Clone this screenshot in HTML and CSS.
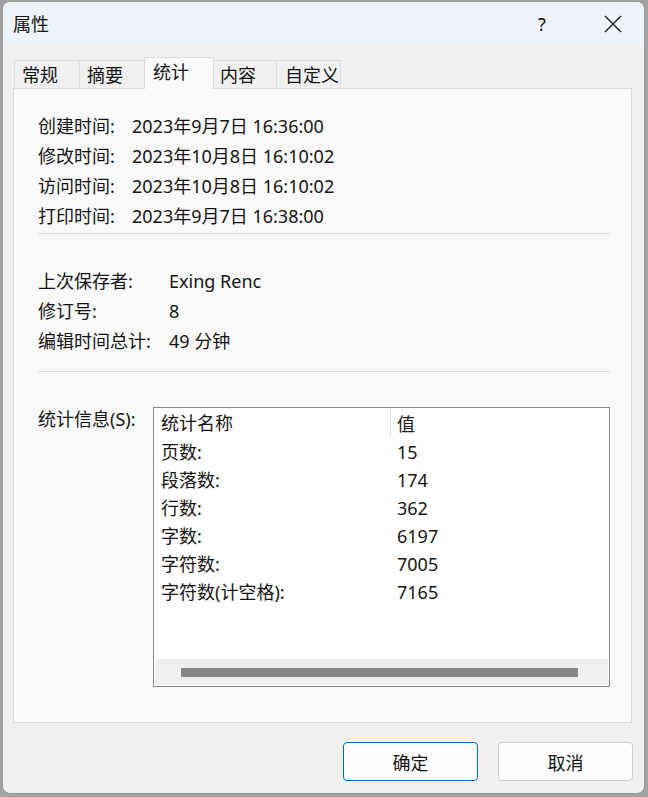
FILE: index.html
```html
<!DOCTYPE html>
<html>
  <head>
    <meta charset="UTF-8" />
    <title>属性</title>
    <link rel="stylesheet" href="styles.css">
  </head>
  <body>
    <div class="window">
      <div class="titlebar">
        <span class="title">属性</span>
        <span class="help">?</span>
        <span class="close">
          <svg width="18" height="18" viewBox="0 0 18 18">
            <path d="M1 1L17 17M17 1L1 17" stroke="#1a1a1a" stroke-width="1.3" fill="none" />
          </svg>
        </span>
      </div>

      <div class="tabs">
        <div class="tab tab-a">常规</div>
        <div class="tab tab-b">摘要</div>
        <div class="tab tab-c active">统计</div>
        <div class="tab tab-d">内容</div>
        <div class="tab tab-e">自定义</div>
      </div>

      <div class="panel">
        <div class="group dates">
          <div class="row"><span class="label">创建时间:</span><span>2023年9月7日 16:36:00</span></div>
          <div class="row"><span class="label">修改时间:</span><span>2023年10月8日 16:10:02</span></div>
          <div class="row"><span class="label">访问时间:</span><span>2023年10月8日 16:10:02</span></div>
          <div class="row"><span class="label">打印时间:</span><span>2023年9月7日 16:38:00</span></div>
        </div>

        <div class="group meta">
          <div class="row"><span class="label">上次保存者:</span><span>Exing Renc</span></div>
          <div class="row"><span class="label">修订号:</span><span>8</span></div>
          <div class="row"><span class="label">编辑时间总计:</span><span>49 分钟</span></div>
        </div>

        <div class="stats">
          <div class="stats-label">统计信息(S):</div>
          <div class="listbox">
            <div class="list-head">
              <div class="col-name">统计名称</div>
              <div class="col-value">值</div>
            </div>
            <div class="list-body">
              <div class="list-row"><div class="col-name">页数:</div><div class="col-value">15</div></div>
              <div class="list-row"><div class="col-name">段落数:</div><div class="col-value">174</div></div>
              <div class="list-row"><div class="col-name">行数:</div><div class="col-value">362</div></div>
              <div class="list-row"><div class="col-name">字数:</div><div class="col-value">6197</div></div>
              <div class="list-row"><div class="col-name">字符数:</div><div class="col-value">7005</div></div>
              <div class="list-row"><div class="col-name">字符数(计空格):</div><div class="col-value">7165</div></div>
            </div>
            <div class="hscroll"><div class="thumb"></div></div>
          </div>
        </div>
      </div>

      <div class="footer">
        <button class="btn btn-default">确定</button>
        <button class="btn">取消</button>
      </div>
    </div>
  </body>
</html>
```

FILE: styles.css
```css
* {
  margin: 0;
  padding: 0;
  box-sizing: border-box;
}

body {
  font-family: "Noto Sans", "Noto Sans CJK SC", sans-serif;
  font-size: 18px;
  color: #141414;
  background: #a3a3a3;
  width: 648px;
  height: 797px;
  overflow: hidden;
}

.window {
  margin: 1px 0 0 2px;
  width: 643px;
  height: 793px;
  background: #f0f0f0;
  border: 1px solid #9a9a9a;
  border-radius: 8px;
  overflow: hidden;
  display: flex;
  flex-direction: column;
}

.titlebar {
  height: 43px;
  flex-shrink: 0;
  background: #eef2f9;
  display: flex;
  align-items: center;
  padding-left: 10px;
}

.title {
  flex: 1;
  line-height: 1;
}

.help {
  width: 20px;
  text-align: center;
  margin-right: 52px;
  line-height: 1;
}

.close {
  width: 18px;
  height: 18px;
  margin-right: 22px;
  display: flex;
}

/* tabs */
.tabs {
  display: flex;
  align-items: flex-end;
  margin-top: 12px;
  padding-left: 12px;
  height: 31px;
  position: relative;
  z-index: 1;
}

.tab {
  height: 28px;
  line-height: 28px;
  padding-left: 7px;
  background: #f0f0f0;
  border: 1px solid #dcdcdc;
  border-bottom: none;
  margin-left: -1px;
}

.tab-a { width: 66px; }
.tab-b { width: 66px; }
.tab-d { width: 65px; }
.tab-e { width: 65px; padding-left: 8px; }

.tab.active {
  width: 70px;
  height: 32px;
  line-height: 28px;
  padding-left: 8px;
  background: #f9f9f9;
  margin-bottom: -1px;
  margin-right: -1px;
  position: relative;
}

/* panel */
.panel {
  margin: 0 12px 0 10px;
  height: 635px;
  flex-shrink: 0;
  background: #f9f9f9;
  border: 1px solid #dcdcdc;
  padding: 22px 21px 0 24px;
}

.group {
  border-bottom: 1px solid #dcdcdc;
}

.row {
  display: flex;
  height: 30px;
  line-height: 30px;
}

.dates {
  padding-bottom: 2px;
}

.dates .label {
  width: 94px;
}

.meta {
  padding-top: 32px;
  padding-bottom: 15px;
}

.meta .label {
  width: 131px;
}

/* statistics list */
.stats {
  display: flex;
  margin-top: 35px;
}

.stats-label {
  width: 115px;
  line-height: 24px;
}

.listbox {
  flex: 1;
  height: 280px;
  background: #fff;
  border: 1px solid #828790;
  display: flex;
  flex-direction: column;
}

.list-head,
.list-row {
  display: flex;
  height: 28px;
  line-height: 28px;
}

.list-head {
  height: 30px;
  line-height: 31px;
}

.list-head .col-value {
  border-left: 1px solid #e5e5e5;
  margin: 1px 0 0;
  padding-left: 6px;
}

.col-name {
  width: 236px;
  padding-left: 7px;
}

.col-value {
  padding-left: 7px;
}

.list-body {
  flex: 1;
}

.hscroll {
  height: 26px;
  margin: 0 1px 1px;
  background: #f0f0f0;
  padding: 9px 0 0 26px;
}

.thumb {
  width: 397px;
  height: 9px;
  background: #868686;
}

/* buttons */
.footer {
  display: flex;
  justify-content: flex-end;
  gap: 20px;
  padding: 19px 11px 0 0;
}

.btn {
  width: 135px;
  height: 39px;
  font-family: inherit;
  font-size: 18px;
  color: #141414;
  background: #fdfdfd;
  border: 1px solid #d0d0d0;
  border-radius: 4px;
}

.btn-default {
  border-color: #0067c0;
}
```
